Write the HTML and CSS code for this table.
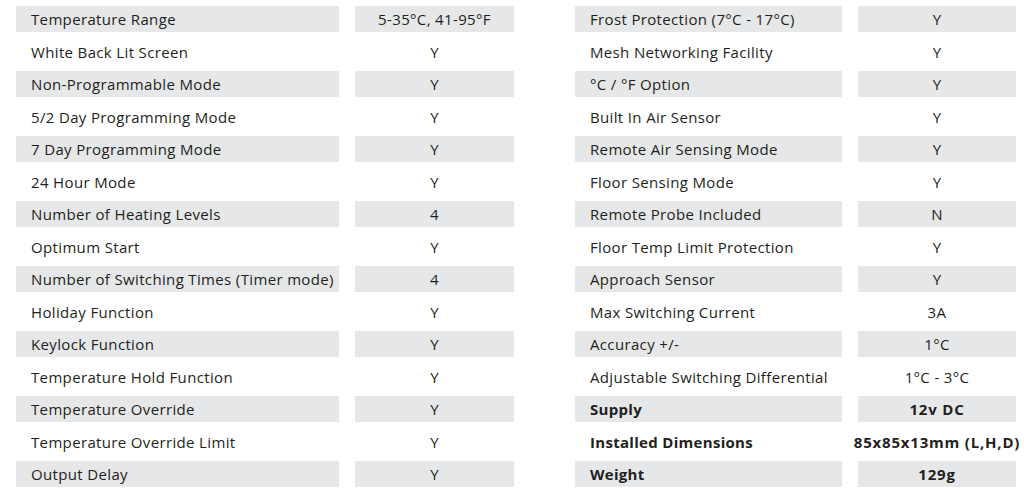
FILE: index.html
```html
<!DOCTYPE html>
<html>
<head>
<meta charset="utf-8">
<link rel="stylesheet" href="styles.css">
</head>
<body>
<div class="page">
  <div class="spec spec-left">
    <div class="row"><div class="label">Temperature Range</div><div class="value">5-35°C, 41-95°F</div></div>
    <div class="row"><div class="label">White Back Lit Screen</div><div class="value">Y</div></div>
    <div class="row"><div class="label">Non-Programmable Mode</div><div class="value">Y</div></div>
    <div class="row"><div class="label">5/2 Day Programming Mode</div><div class="value">Y</div></div>
    <div class="row"><div class="label">7 Day Programming Mode</div><div class="value">Y</div></div>
    <div class="row"><div class="label">24 Hour Mode</div><div class="value">Y</div></div>
    <div class="row"><div class="label">Number of Heating Levels</div><div class="value">4</div></div>
    <div class="row"><div class="label">Optimum Start</div><div class="value">Y</div></div>
    <div class="row"><div class="label">Number of Switching Times (Timer mode)</div><div class="value">4</div></div>
    <div class="row"><div class="label">Holiday Function</div><div class="value">Y</div></div>
    <div class="row"><div class="label">Keylock Function</div><div class="value">Y</div></div>
    <div class="row"><div class="label">Temperature Hold Function</div><div class="value">Y</div></div>
    <div class="row"><div class="label">Temperature Override</div><div class="value">Y</div></div>
    <div class="row"><div class="label">Temperature Override Limit</div><div class="value">Y</div></div>
    <div class="row"><div class="label">Output Delay</div><div class="value">Y</div></div>
  </div>
  <div class="spec spec-right">
    <div class="row"><div class="label">Frost Protection (7°C - 17°C)</div><div class="value">Y</div></div>
    <div class="row"><div class="label">Mesh Networking Facility</div><div class="value">Y</div></div>
    <div class="row"><div class="label">°C / °F Option</div><div class="value">Y</div></div>
    <div class="row"><div class="label">Built In Air Sensor</div><div class="value">Y</div></div>
    <div class="row"><div class="label">Remote Air Sensing Mode</div><div class="value">Y</div></div>
    <div class="row"><div class="label">Floor Sensing Mode</div><div class="value">Y</div></div>
    <div class="row"><div class="label">Remote Probe Included</div><div class="value">N</div></div>
    <div class="row"><div class="label">Floor Temp Limit Protection</div><div class="value">Y</div></div>
    <div class="row"><div class="label">Approach Sensor</div><div class="value">Y</div></div>
    <div class="row"><div class="label">Max Switching Current</div><div class="value">3A</div></div>
    <div class="row"><div class="label">Accuracy +/-</div><div class="value">1°C</div></div>
    <div class="row"><div class="label">Adjustable Switching Differential</div><div class="value">1°C - 3°C</div></div>
    <div class="row bold"><div class="label">Supply</div><div class="value">12v DC</div></div>
    <div class="row bold"><div class="label">Installed Dimensions</div><div class="value">85x85x13mm (L,H,D)</div></div>
    <div class="row bold"><div class="label">Weight</div><div class="value">129g</div></div>
  </div>
</div>
</body>
</html>
```
FILE: styles.css
```css
html, body {
  margin: 0;
  padding: 0;
  background: #ffffff;
}
body {
  font-family: "Open Sans", "Liberation Sans", sans-serif;
  font-size: 15px;
  letter-spacing: 0.35px;
  color: #231f20;
}
.page {
  display: flex;
  gap: 61px;
  padding: 6px 0 0 16px;
}
.spec {
  display: flex;
  flex-direction: column;
  gap: 6.5px;
}
.row {
  display: grid;
  column-gap: 16px;
  height: 26px;
}
.spec-left .row { grid-template-columns: 323px 159px; }
.spec-right .row { grid-template-columns: 267px 158px; }
.label, .value {
  display: flex;
  align-items: center;
  white-space: nowrap;
}
.label { padding-left: 15px; }
.value { justify-content: center; }
.row:nth-child(odd) .label,
.row:nth-child(odd) .value {
  background: #e6e7e8;
}
.bold { font-weight: 700; letter-spacing: 0.3px; }
.bold .value { letter-spacing: 0.8px; }
```
